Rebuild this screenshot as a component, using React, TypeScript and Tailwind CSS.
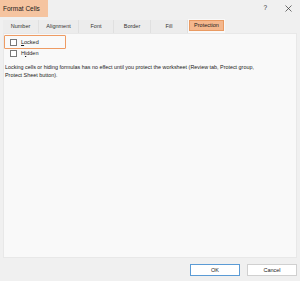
import React from "react";

const tabs = ["Number", "Alignment", "Font", "Border", "Fill", "Protection"];
const widths = ["w-[36px]", "w-[40px]", "w-[35px]", "w-[37px]", "w-[37px]", "w-[37px]"];

export default function App() {
  return (
    <div
      className="w-[300px] h-[281px] bg-[#f0f0f0] flex flex-col text-[#1a1a1a] overflow-hidden"
      style={{ fontFamily: '"Liberation Sans", Arial, sans-serif' }}
    >
      <div className="h-[18px] flex items-start justify-between">
        <div className="h-[17px] w-[48px] bg-[#f5c4a0] flex items-center pl-[3px] text-[6.5px]">
          Format Cells
        </div>
        <div className="flex items-center gap-[18px] pr-[8px] pt-[3px] text-[#333]">
          <span className="text-[6.5px]">?</span>
          <svg width="7" height="7" viewBox="0 0 7 7" className="mt-[1px]">
            <path d="M0.5 0.5 L6.5 6.5 M6.5 0.5 L0.5 6.5" stroke="#333" strokeWidth="0.7" />
          </svg>
        </div>
      </div>
      <div className="flex pl-[3px] mt-[2px] h-[13px] items-end">
        {tabs.map((t, i) =>
          t === "Protection" ? (
            <div key={t} className={`${widths[i]} h-[14px] bg-[#f9f9f9] flex items-center justify-center px-[1px] pb-[1px]`}>
              <div className="w-full h-[11px] bg-[#f4b78d] border border-[#e99a62] text-[5.5px] flex items-center justify-center">
                {t}
              </div>
            </div>
          ) : (
            <div
              key={t}
              className={`${widths[i]} h-[13px] bg-[#ececec] border-r border-[#e0e0e0] text-[5.5px] flex items-center justify-center text-[#333]`}
            >
              {t}
            </div>
          )
        )}
      </div>
      <div className="mx-[3px] h-[225px] bg-[#f9f9f9] border border-[#e8e8e8] flex flex-col">
        <div className="mt-[1px] w-[62px] h-[14px] border border-[#ee9b63] rounded-[1px] flex items-center pl-[5px] gap-[4px]">
          <div className="w-[7px] h-[7px] border border-[#777] bg-white" />
          <span className="text-[5.5px]">
            <span className="underline underline-offset-[1px]">L</span>ocked
          </span>
        </div>
        <div className="h-[9px] flex items-center pl-[6px] gap-[4px]">
          <div className="w-[7px] h-[7px] border border-[#777] bg-white" />
          <span className="text-[5.5px]">
            H<span className="underline underline-offset-[1px]">i</span>dden
          </span>
        </div>
        <p className="mt-[5px] pl-[1px] text-[5.4px] leading-[8px] whitespace-nowrap">
          Locking cells or hiding formulas has no effect until you protect the worksheet (Review tab, Protect group,
          <br />
          Protect Sheet button).
        </p>
      </div>
      <div className="flex justify-end gap-[7px] pr-[3px] mt-[6px]">
        <div className="w-[50px] h-[12px] bg-white border border-[#5b9bd5] text-[5.5px] flex items-center justify-center">OK</div>
        <div className="w-[50px] h-[12px] bg-white border border-[#d0d0d0] text-[5.5px] flex items-center justify-center">Cancel</div>
      </div>
    </div>
  );
}
